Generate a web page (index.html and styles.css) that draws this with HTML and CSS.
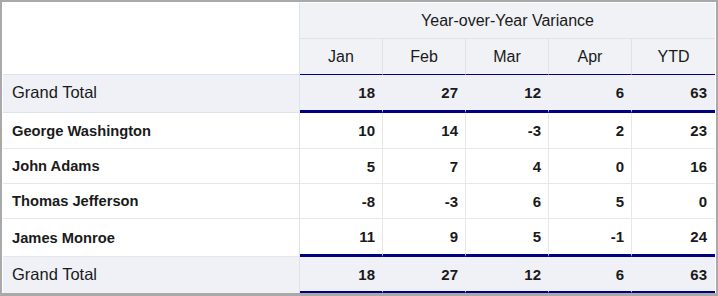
FILE: index.html
```html
<!DOCTYPE html>
<html>
<head>
<meta charset="utf-8">
<link rel="stylesheet" href="styles.css">
</head>
<body>
<div class="frame">
  <table class="pivot">
    <colgroup>
      <col class="c-label">
      <col class="c-num"><col class="c-num"><col class="c-num"><col class="c-num"><col class="c-num">
    </colgroup>
    <thead>
      <tr class="h1">
        <th class="corner" rowspan="2"></th>
        <th class="group" colspan="5">Year-over-Year Variance</th>
      </tr>
      <tr class="h2">
        <th class="mon">Jan</th>
        <th class="mon">Feb</th>
        <th class="mon">Mar</th>
        <th class="mon">Apr</th>
        <th class="mon last">YTD</th>
      </tr>
    </thead>
    <tbody>
      <tr class="total top">
        <td class="label">Grand Total</td>
        <td class="num">18</td><td class="num">27</td><td class="num">12</td><td class="num">6</td><td class="num last">63</td>
      </tr>
      <tr class="row r1">
        <td class="label">George Washington</td>
        <td class="num">10</td><td class="num">14</td><td class="num">-3</td><td class="num">2</td><td class="num last">23</td>
      </tr>
      <tr class="row r2">
        <td class="label">John Adams</td>
        <td class="num">5</td><td class="num">7</td><td class="num">4</td><td class="num">0</td><td class="num last">16</td>
      </tr>
      <tr class="row r3">
        <td class="label">Thomas Jefferson</td>
        <td class="num">-8</td><td class="num">-3</td><td class="num">6</td><td class="num">5</td><td class="num last">0</td>
      </tr>
      <tr class="row r4 lastrow">
        <td class="label">James Monroe</td>
        <td class="num">11</td><td class="num">9</td><td class="num">5</td><td class="num">-1</td><td class="num last">24</td>
      </tr>
      <tr class="total bottom">
        <td class="label">Grand Total</td>
        <td class="num">18</td><td class="num">27</td><td class="num">12</td><td class="num">6</td><td class="num last">63</td>
      </tr>
    </tbody>
  </table>
</div>
</body>
</html>
```
FILE: styles.css
```css
html, body {
  margin: 0;
  padding: 0;
  background: #ffffff;
}
.frame {
  box-sizing: border-box;
  width: 718px;
  height: 296px;
  border: 2px solid #a9a9a9;
  border-bottom-width: 3px;
  padding: 1px 2px 0 1px;
  background: #ffffff;
  font-family: "Liberation Sans", Arial, sans-serif;
  color: #1a1a1a;
}
.pivot {
  border-collapse: separate;
  border-spacing: 0;
  table-layout: fixed;
  width: 712px;
}
.c-label { width: 297px; }
.c-num { width: 83px; }

.pivot th, .pivot td {
  padding: 0;
  box-sizing: border-box;
}
.h1 { height: 36px; }
.h2 { height: 36px; }
.total.top { height: 38px; }
.r1 { height: 36px; }
.r2 { height: 35px; }
.r3 { height: 35px; }
.r4 { height: 38px; }
.total.bottom { height: 36px; }

.pivot .corner {
  background: #ffffff;
  border-right: 1px solid #dde3ea;
  border-bottom: 1px solid #dde3ea;
}
.pivot .group {
  background: #f0f2f6;
  border-bottom: 1px solid #dde3ea;
  font-weight: normal;
  font-size: 16px;
  text-align: center;
  color: #1a1a1a;
}
.pivot .mon {
  background: #f0f2f6;
  border-right: 1px solid #dde3ea;
  border-bottom: 1px solid #000080;
  font-weight: normal;
  font-size: 16px;
  text-align: center;
  color: #1a1a1a;
  padding-top: 1px;
}
.pivot .mon.last { border-right: none; }

.pivot .label {
  border-right: 1px solid #dde3ea;
  border-bottom: 1px solid #e4e7eb;
  padding-left: 9px;
  text-align: left;
  font-weight: bold;
  font-size: 14.7px;
  color: #1a1a1a;
}
.pivot .total .label {
  font-weight: normal;
  font-size: 16.5px;
  background: #eff1f6;
  border-bottom-color: #dde3ea;
  padding-bottom: 2px;
}
.pivot .num {
  text-align: right;
  padding-right: 7px;
  font-weight: bold;
  font-size: 15px;
  border-right: 1px solid #e8e8e8;
  border-bottom: 1px solid #e8e8e8;
  color: #1a1a1a;
}
.pivot .num.last { border-right: none; padding-right: 8px; }
.pivot .total .num {
  background: #eff1f6;
  border-right-color: #eff1f6;
}
.pivot .total.top .num { border-bottom: 3px solid #000080; }
.pivot .total.bottom .num { border-bottom: 2px solid #000080; }
.pivot .lastrow .num { border-bottom: 3px solid #000080; }
.pivot .total.bottom .label { border-bottom: none; }
```
